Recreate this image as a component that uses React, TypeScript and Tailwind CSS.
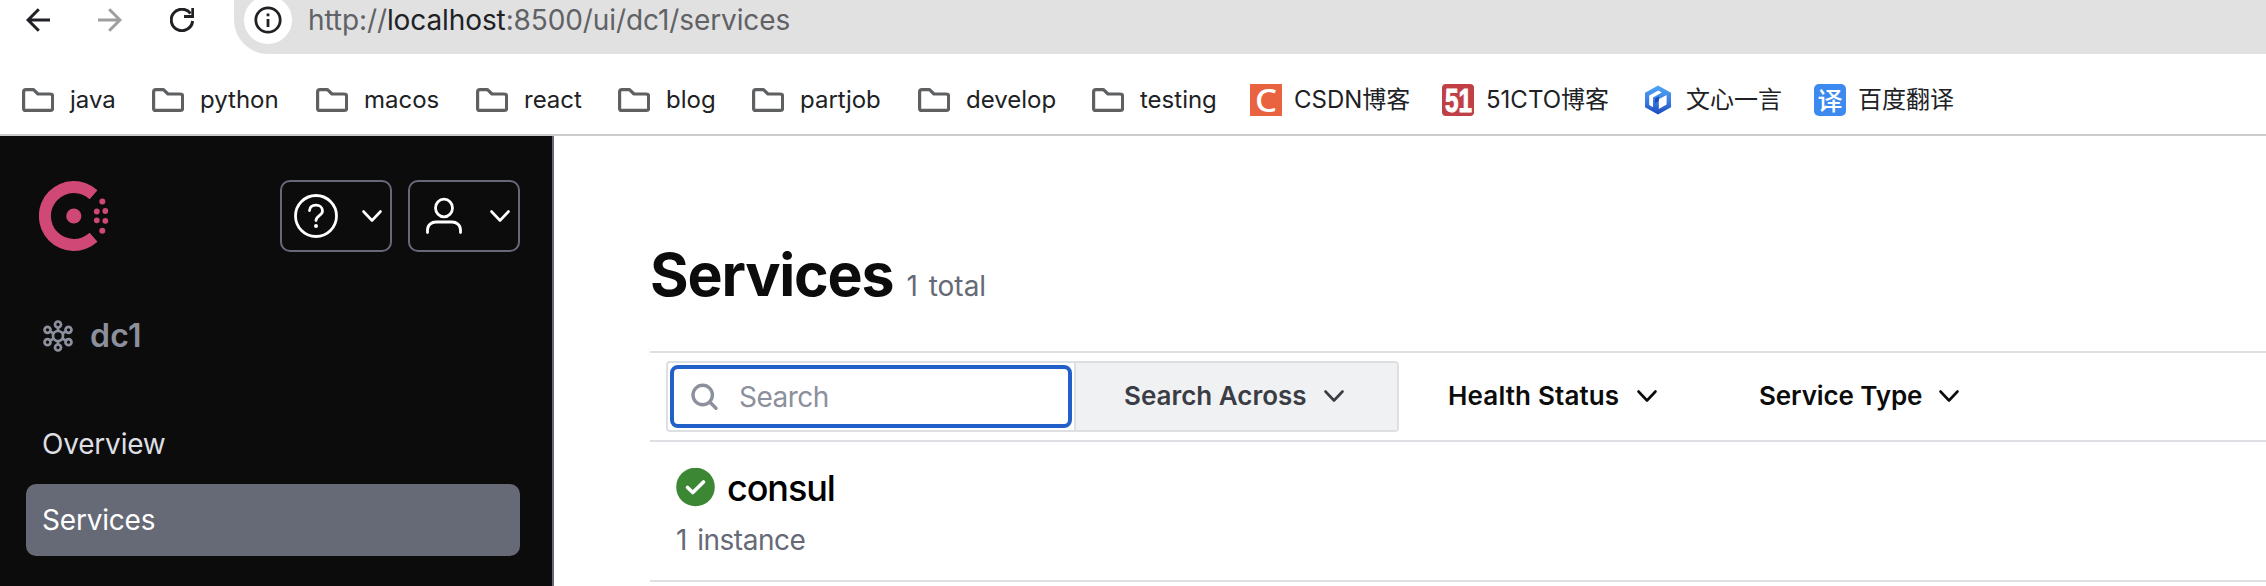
import type { ReactNode } from 'react';

const bookmarks = [
  { label: 'java', icon: 'folder', width: 'w-[130px]' },
  { label: 'python', icon: 'folder', width: 'w-[164px]' },
  { label: 'macos', icon: 'folder', width: 'w-[160px]' },
  { label: 'react', icon: 'folder', width: 'w-[142px]' },
  { label: 'blog', icon: 'folder', width: 'w-[134px]' },
  { label: 'partjob', icon: 'folder', width: 'w-[166px]' },
  { label: 'develop', icon: 'folder', width: 'w-[174px]' },
  { label: 'testing', icon: 'folder', width: 'w-[158px]' },
  { label: 'CSDN博客', icon: 'csdn', width: 'w-[192px]' },
  { label: '51CTO博客', icon: 'cto', width: 'w-[200px]' },
  { label: '文心一言', icon: 'yiyan', width: 'w-[172px]' },
  { label: '百度翻译', icon: 'fanyi', width: 'w-[172px]' },
];

function BookmarkIcon({ name }: { name: string }) {
  if (name === 'csdn') {
    return (
      <svg className="h-8 w-8 overflow-visible" viewBox="0 0 32 32">
        <rect width="32" height="32" fill="#ea6340" />
        <text
          x="5"
          y="27.500"
          textLength="22"
          lengthAdjust="spacingAndGlyphs"
          fill="#fff"
          className="font-['Noto_Sans',sans-serif] text-[32px] font-medium"
        >
          C
        </text>
      </svg>
    );
  }
  if (name === 'cto') {
    return (
      <svg className="h-8 w-8 overflow-visible" viewBox="0 0 32 32">
        <rect width="32" height="32" rx="4" fill="#c04045" />
        <text
          x="3"
          y="28"
          textLength="27"
          lengthAdjust="spacingAndGlyphs"
          fill="#fff"
          stroke="#fff"
          strokeWidth="1"
          className="font-['Liberation_Sans',sans-serif] text-[34px] font-bold"
        >
          51
        </text>
      </svg>
    );
  }
  if (name === 'yiyan') {
    return (
      <svg className="h-8 w-8" viewBox="0 0 32 32" fill="none">
        <defs>
          <linearGradient id="yiyan" x1="0" y1="0" x2="0" y2="1">
            <stop stopColor="#4da6f5" />
            <stop offset="0.55" stopColor="#3b7ce0" />
            <stop offset="1" stopColor="#1a49bd" />
          </linearGradient>
        </defs>
        <path d="M16 1.500L29 8.800V23.200L16 30.500L3 23.200V8.800Z" fill="url(#yiyan)" />
        <path d="M7.200 11.600L16.300 6.500L19.800 8.600L11 13.600V23.300L7.200 21Z" fill="#fff" />
        <path d="M16.800 15.300L24.600 10.900V20.600L16.800 25Z" fill="#fff" />
        <path d="M13 14.500L16.800 12.300V17L13 19.200Z" fill="#1a49bd" />
      </svg>
    );
  }
  if (name === 'fanyi') {
    return (
      <span className="flex h-8 w-8 items-center justify-center rounded-[5px] bg-[#3c8af0] pb-[3px] font-['Noto_Sans_CJK_SC',sans-serif] text-[25px] leading-8 font-medium text-white">
        译
      </span>
    );
  }
  return (
    <svg className="h-8 w-8" viewBox="0 0 32 32" fill="none" stroke="#5f6062" strokeWidth="3.2">
      <path
        d="M1.600 8C1.600 6.500 2.500 5.600 4 5.600H11.500L16 10H28C29.500 10 30.600 11 30.600 12.300V24.400C30.600 25.600 29.800 26.400 28.500 26.400H3.800C2.400 26.400 1.600 25.600 1.600 24.400Z"
        strokeLinejoin="round"
      />
    </svg>
  );
}

function Chevron({ className }: { className?: string }) {
  return (
    <svg
      className={`h-6 w-6 shrink-0 ${className ?? ''}`}
      viewBox="0 0 24 24"
      fill="none"
      stroke="currentColor"
      strokeWidth="2.6"
      strokeLinecap="round"
      strokeLinejoin="round"
    >
      <path d="M3.500 7.500L12 16.500L20.500 7.500" />
    </svg>
  );
}

function NavButton({ children }: { children: ReactNode }) {
  return (
    <button className="flex h-[72px] w-28 items-center justify-between rounded-[10px] border-2 border-[#656a76] pr-[6px] pl-3 text-white">
      {children}
      <Chevron />
    </button>
  );
}

function ConsulLogo() {
  return (
    <svg className="mb-px h-[70px] w-[70px]" viewBox="0 0 70 70" fill="#d04876">
      <path d="M58.500 9.200A35 35 0 1 0 58.500 60.800L50.600 51.800A23 23 0 1 1 50.600 18.200Z" />
      <circle cx="34.800" cy="35" r="7.600" />
      <circle cx="63.300" cy="20.600" r="3" />
      <circle cx="57.800" cy="30.500" r="2.900" />
      <circle cx="66.300" cy="30" r="2.900" />
      <circle cx="57.800" cy="39.300" r="2.900" />
      <circle cx="66.300" cy="39.800" r="2.900" />
      <circle cx="63.300" cy="49.700" r="3" />
    </svg>
  );
}

function BrowserBar() {
  return (
    <div className="flex h-[54px] shrink-0 text-[#202124]">
      <div className="flex h-10 w-[234px] shrink-0 items-center gap-12 pl-[26px]">
        <svg className="h-6 w-6" viewBox="0 0 24 24" fill="none" stroke="currentColor" strokeWidth="3">
          <path d="M24 12H2.500M12.800 1.200L2 12L12.800 22.800" />
        </svg>
        <svg className="h-6 w-6 text-[#9e9e9e]" viewBox="0 0 24 24" fill="none" stroke="currentColor" strokeWidth="3">
          <path d="M0 12H21.500M11.200 1.200L22 12L11.200 22.800" />
        </svg>
        <svg className="h-6 w-6" viewBox="0 0 24 24" fill="none" stroke="currentColor" strokeWidth="3">
          <path d="M22.600 13A10.700 10.700 0 1 1 20.500 5.500" />
          <path d="M22.800 0V8.500H14" />
        </svg>
      </div>
      <div className="flex flex-1 rounded-bl-[34px] bg-[#e1e1e1]">
        <div className="mt-[-4px] ml-[10px] flex h-12 w-12 items-center justify-center rounded-full bg-white">
          <svg className="h-7 w-7" viewBox="0 0 28 28" fill="none" stroke="currentColor" strokeWidth="2.800">
            <circle cx="14" cy="14" r="12.200" />
            <path d="M14 13V21M14 7.500V10.300" />
          </svg>
        </div>
        <div className="mt-[-2px] ml-4 text-[28px] leading-[44px] tracking-[-0.1px] text-[#606265]">
          http://<span className="text-[#202124]">localhost</span>:8500/ui/dc1/services
        </div>
      </div>
    </div>
  );
}

function Sidebar() {
  return (
    <aside className="flex w-[554px] shrink-0 flex-col border-r-2 border-[#656a76] bg-[#0c0c0c]">
      <div className="flex h-[116px] shrink-0 items-end justify-between pr-8 pl-[39px]">
        <ConsulLogo />
        <div className="flex gap-4">
          <NavButton>
            <svg className="h-11 w-11" viewBox="0 0 44 44" fill="none" stroke="currentColor" strokeWidth="2.800" strokeLinecap="round">
              <circle cx="22" cy="22" r="20.500" />
              <path d="M15.500 16.500C15.800 13 18.500 11.200 22 11.200C25.600 11.200 28.500 13.500 28.500 17C28.500 21.500 22 21.800 22 26.500" />
              <circle cx="22" cy="32" r="2" fill="currentColor" stroke="none" />
            </svg>
          </NavButton>
          <NavButton>
            <svg className="h-11 w-11" viewBox="0 0 44 44" fill="none" stroke="currentColor" strokeWidth="2.800" strokeLinecap="round">
              <ellipse cx="22" cy="14" rx="8.500" ry="8.800" />
              <path d="M5.500 38.500V36C5.500 31 9.500 28 14 28H30C34.500 28 38.500 31 38.500 36V38.500" />
            </svg>
          </NavButton>
        </div>
      </div>

      <div className="mt-16 flex h-10 shrink-0 items-center pl-[42px] text-[#8c909c]">
        <svg className="h-8 w-8" viewBox="0 0 32 32" fill="none" stroke="currentColor" strokeWidth="2.700">
          <circle cx="16" cy="16" r="5" />
          <circle cx="16" cy="4.500" r="3" />
          <circle cx="16" cy="27.500" r="3" />
          <circle cx="5.500" cy="9.800" r="3" />
          <circle cx="26.500" cy="9.800" r="3" />
          <circle cx="5.500" cy="22.200" r="3" />
          <circle cx="26.500" cy="22.200" r="3" />
          <path d="M16 7.500V11M16 21V24.500M8 11.300L11.700 13.500M20.300 18.500L24 20.700M8 20.700L11.700 18.500M20.300 13.500L24 11.300" />
        </svg>
        <span className="ml-4 text-[32px] leading-10 font-semibold tracking-[0.2px]">dc1</span>
      </div>

      <nav className="mt-[52px] flex shrink-0 flex-col gap-1 pr-8 pl-[26px] text-[28px] tracking-[-0.2px] text-[#dedfe3]">
        <a className="flex h-[72px] items-center rounded-[10px] pl-4">Overview</a>
        <a className="flex h-[72px] items-center rounded-[10px] bg-[#656a76] pl-4 text-white">Services</a>
        <a className="flex h-[72px] items-center rounded-[10px] pt-[2px] pl-4">Nodes</a>
      </nav>
    </aside>
  );
}

function Services() {
  return (
    <main className="flex-1 pl-24 text-[#0c0c0c]">
      <header className="flex h-[215px] items-baseline pt-[99px]">
        <h1 className="text-[59px] leading-[80px] font-bold tracking-[-1.2px]">Services</h1>
        <span className="ml-[13px] text-[28px] text-[#656a76] [word-spacing:3px]">1 total</span>
      </header>

      <div className="flex h-[91px] items-center border-y-2 border-[#dedfe3] pl-4 text-[26px] font-semibold">
        <div className="flex h-[71px] w-[733px] rounded-[4px] border-2 border-[#dedfe3]">
          <div className="flex w-[408px] shrink-0 border-r-2 border-[#dedfe3] p-[2px]">
            <label className="flex flex-1 items-center rounded-lg border-4 border-[#2160c8] pl-[17px]">
              <svg className="h-7 w-7 text-[#8c909c]" viewBox="0 0 28 28" fill="none" stroke="currentColor" strokeWidth="3.400" strokeLinecap="round">
                <circle cx="11.700" cy="12" r="9.700" />
                <path d="M19 19.300L25 25.300" />
              </svg>
              <input
                type="text"
                placeholder="Search"
                className="ml-5 w-72 text-[28px] font-normal tracking-[-0.5px] outline-none placeholder:text-[#8c909c]"
              />
            </label>
          </div>
          <button className="flex flex-1 items-center bg-[#f0f1f3] pb-[2px] pl-[48px] text-[#3b3d45]">
            Search Across
            <Chevron className="ml-[15px]" />
          </button>
        </div>
        <button className="ml-12 flex w-[311px] items-center pb-[2px] pl-px tracking-[0.15px]">
          Health Status
          <Chevron className="ml-4" />
        </button>
        <button className="flex items-center pb-[2px] pl-px tracking-[-0.1px]">
          Service Type
          <Chevron className="ml-[15px]" />
        </button>
      </div>

      <div className="flex h-[140px] flex-col border-b-2 border-[#dedfe3] pt-6 pl-[26px]">
        <div className="flex h-11 items-center">
          <svg className="h-10 w-10" viewBox="0 0 40 40" fill="none">
            <circle cx="19.500" cy="19" r="19.300" fill="#3c8734" />
            <path d="M11.500 19.500L16.800 24.500L27.500 14" stroke="#fff" strokeWidth="3.600" strokeLinecap="round" strokeLinejoin="round" />
          </svg>
          <span className="ml-[11px] text-[36px] leading-[44px] font-medium tracking-[-1.1px] text-black">consul</span>
        </div>
        <div className="mt-3 text-[28px] leading-9 tracking-[-0.5px] text-[#656a76] [word-spacing:3px]">1 instance</div>
      </div>
    </main>
  );
}

export default function App() {
  return (
    <div className="flex h-[586px] w-[2266px] flex-col overflow-hidden bg-white font-['Inter','Noto_Sans_CJK_SC',sans-serif]">
      <BrowserBar />
      <div className="flex h-[82px] shrink-0 items-center border-b-2 border-[#cccccc] pt-3 pl-[22px] text-[#202124]">
        {bookmarks.map((item) => (
          <a key={item.label} className={`flex shrink-0 items-center ${item.width}`}>
            <BookmarkIcon name={item.icon} />
            <span
              className={`text-[24px] leading-8 whitespace-nowrap ${item.icon === 'folder' ? 'ml-4' : 'ml-3'}`}
            >
              {item.label}
            </span>
          </a>
        ))}
      </div>
      <div className="flex h-[450px] shrink-0 overflow-hidden">
        <Sidebar />
        <Services />
      </div>
    </div>
  );
}
